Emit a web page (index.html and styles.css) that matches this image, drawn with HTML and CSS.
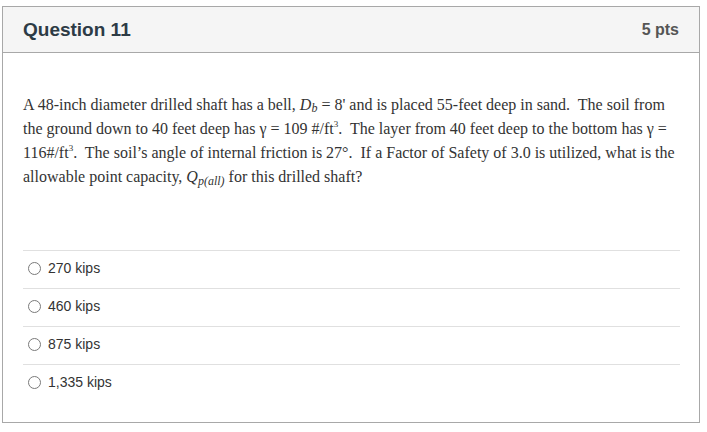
FILE: index.html
```html
<!DOCTYPE html>
<html>
<head>
<meta charset="utf-8">
<link rel="stylesheet" href="styles.css">
</head>
<body>
<div class="question">
  <div class="header">
    <span class="title">Question 11</span>
    <span class="pts">5 pts</span>
  </div>
  <div class="content">
    <p class="text">A 48-inch diameter drilled shaft has a bell, <i>D</i><sub class="sb"><i>b</i></sub> = 8' and is placed 55-feet deep in sand.&nbsp; The soil from the ground down to 40 feet deep has γ = 109 #/ft<sup>3</sup>.&nbsp; The layer from 40 feet deep to the bottom has γ = 116#/ft<sup>3</sup>.&nbsp; The soil’s angle of internal friction is 27°.&nbsp; If a Factor of Safety of 3.0 is utilized, what is the allowable point capacity, <i>Q</i><sub class="sq"><i>p(all)</i></sub> for this drilled shaft?</p>
    <div class="answers">
      <label class="answer"><span class="radio"></span><span>270 kips</span></label>
      <label class="answer"><span class="radio"></span><span>460 kips</span></label>
      <label class="answer"><span class="radio"></span><span>875 kips</span></label>
      <label class="answer"><span class="radio"></span><span>1,335 kips</span></label>
    </div>
  </div>
</div>
</body>
</html>
```
FILE: styles.css
```css
html, body {
  margin: 0;
  padding: 0;
  background: #fff;
}
body {
  padding: 6px 0 0 2px;
}
.question {
  width: 698px;
  height: 417px;
  box-sizing: border-box;
  border: 1px solid #a8a8a8;
  font-family: "Liberation Sans", Arial, sans-serif;
  color: #2d3b45;
}
.header {
  height: 46px;
  box-sizing: border-box;
  background: #f5f5f5;
  border-bottom: 1px solid #a8a8a8;
  display: flex;
  align-items: center;
  justify-content: space-between;
  padding: 0 20px 0 20px;
}
.title {
  font-weight: bold;
  font-size: 19px;
  color: #2d3b45;
}
.pts {
  font-weight: bold;
  font-size: 16px;
  color: #555;
}
.content {
  padding: 40px 19px 0 20px;
}
.text {
  margin: 0;
  font-family: "Liberation Serif", "Times New Roman", serif;
  font-size: 16px;
  line-height: 24px;
  color: #333;
}
.text sup {
  font-size: 9px;
  line-height: 0;
  vertical-align: 7px;
}
.text sub {
  line-height: 0;
}
.sb {
  font-size: 12px;
  vertical-align: -2px;
}
.sq {
  font-size: 12px;
  vertical-align: -3px;
}
.answers {
  margin-top: 61px;
  display: flex;
  flex-direction: column;
}
.answer {
  display: flex;
  align-items: center;
  gap: 7px;
  height: 38px;
  box-sizing: border-box;
  border-top: 1px solid #e0e0e0;
  padding: 0 0 3px 5px;
  font-size: 14px;
  color: #333;
}
.radio {
  width: 11px;
  height: 11px;
  border: 1px solid #7a7a7a;
  border-radius: 50%;
  background: #fff;
  margin-top: 1px;
}
```
